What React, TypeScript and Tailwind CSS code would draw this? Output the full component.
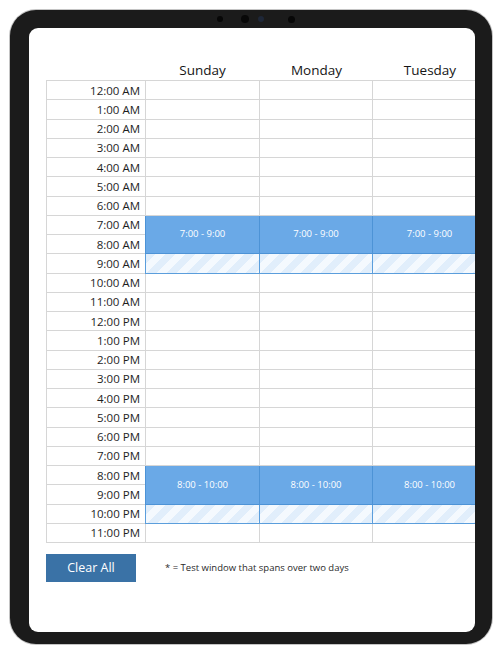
const hours = [
  "12:00 AM", "1:00 AM", "2:00 AM", "3:00 AM", "4:00 AM", "5:00 AM",
  "6:00 AM", "7:00 AM", "8:00 AM", "9:00 AM", "10:00 AM", "11:00 AM",
  "12:00 PM", "1:00 PM", "2:00 PM", "3:00 PM", "4:00 PM", "5:00 PM",
  "6:00 PM", "7:00 PM", "8:00 PM", "9:00 PM", "10:00 PM", "11:00 PM",
];

const days = [
  { name: "Sunday", width: "w-[115px]", first: true },
  { name: "Monday", width: "w-[113px]", first: false },
  { name: "Tuesday", width: "w-[114px]", first: false },
];

// slots per day column: empty cells, a two-hour window and its overflow row
const slots: { kind: "empty" | "window" | "spill"; label?: string }[] = [
  ...Array.from({ length: 7 }, () => ({ kind: "empty" as const })),
  { kind: "window", label: "7:00 - 9:00" },
  { kind: "spill" },
  ...Array.from({ length: 10 }, () => ({ kind: "empty" as const })),
  { kind: "window", label: "8:00 - 10:00" },
  { kind: "spill" },
  { kind: "empty" },
];

const DayColumn = ({ width, first }: { width: string; first: boolean }) => (
  <div className={`flex flex-col shrink-0 ${width}`}>
    {slots.map((slot, i) => {
      if (slot.kind === "window") {
        return (
          <div
            key={i}
            className={`h-[38.5px] flex items-center justify-center bg-[#6aa9e7] border-r border-b border-[#4d93d6] text-white text-[9.5px] ${first ? "border-l" : ""}`}
          >
            {slot.label}
          </div>
        );
      }
      if (slot.kind === "spill") {
        return (
          <div
            key={i}
            className={`h-[19.25px] border-r border-b border-[#5b9edc] bg-[repeating-linear-gradient(135deg,#e1eefb_0px,#e1eefb_7px,#f4f9fe_7px,#f4f9fe_14px)] ${first ? "border-l" : ""}`}
          />
        );
      }
      return (
        <div
          key={i}
          className={`h-[19.25px] border-r border-b border-[#d6d6d6] ${first ? "border-l" : ""}`}
        />
      );
    })}
  </div>
);

const Calendar = () => (
  <div className="flex flex-col w-max">
    <div className="flex h-[20px] items-end">
      <div className="w-[99px] shrink-0" />
      {days.map((d) => (
        <div key={d.name} className={`${d.width} shrink-0 text-center text-[13.5px] leading-[20px] text-[#151515]`}>
          {d.name}
        </div>
      ))}
    </div>
    <div className="flex border-t border-[#d6d6d6]">
      <div className="w-[99px] shrink-0 flex flex-col border-l border-[#d6d6d6]">
        {hours.map((h) => (
          <div
            key={h}
            className="h-[19.25px] border-b border-[#d6d6d6] flex items-center justify-end pr-[5px] text-[11.5px] text-[#1e1e1e]"
          >
            {h}
          </div>
        ))}
      </div>
      {days.map((d) => (
        <DayColumn key={d.name} width={d.width} first={d.first} />
      ))}
    </div>
  </div>
);

export default function App() {
  return (
    <div className="w-[500px] h-[670px] bg-white font-['Open_Sans',sans-serif] pt-[10px] pl-[10px]">
      <div className="w-[482px] h-[634px] rounded-[26px] bg-[#1b1b1b] shadow-[0_0_0_1px_#c4c4c4] flex flex-col">
        <div className="h-[18px] shrink-0 flex items-center">
          <div className="ml-[207px] w-[6px] h-[6px] rounded-full bg-[#070707]" />
          <div className="ml-[18px] w-[8px] h-[8px] rounded-full bg-[#080808]" />
          <div className="ml-[9px] w-[6px] h-[6px] rounded-full bg-[#1e2738]" />
          <div className="ml-[24px] w-[7px] h-[7px] rounded-full bg-[#070707]" />
        </div>
        <div className="ml-[19px] mr-[17px] h-[604px] bg-white rounded-[9px] overflow-hidden pl-[17px] pt-[32px]">
          <Calendar />
          <div className="flex items-center mt-[11px]">
            <button className="w-[90px] h-[28px] bg-[#3a72a6] text-white text-[12.5px]">
              Clear All
            </button>
            <p className="ml-[29px] text-[9.5px] text-[#2a2a2a]">
              * = Test window that spans over two days
            </p>
          </div>
        </div>
      </div>
    </div>
  );
}
